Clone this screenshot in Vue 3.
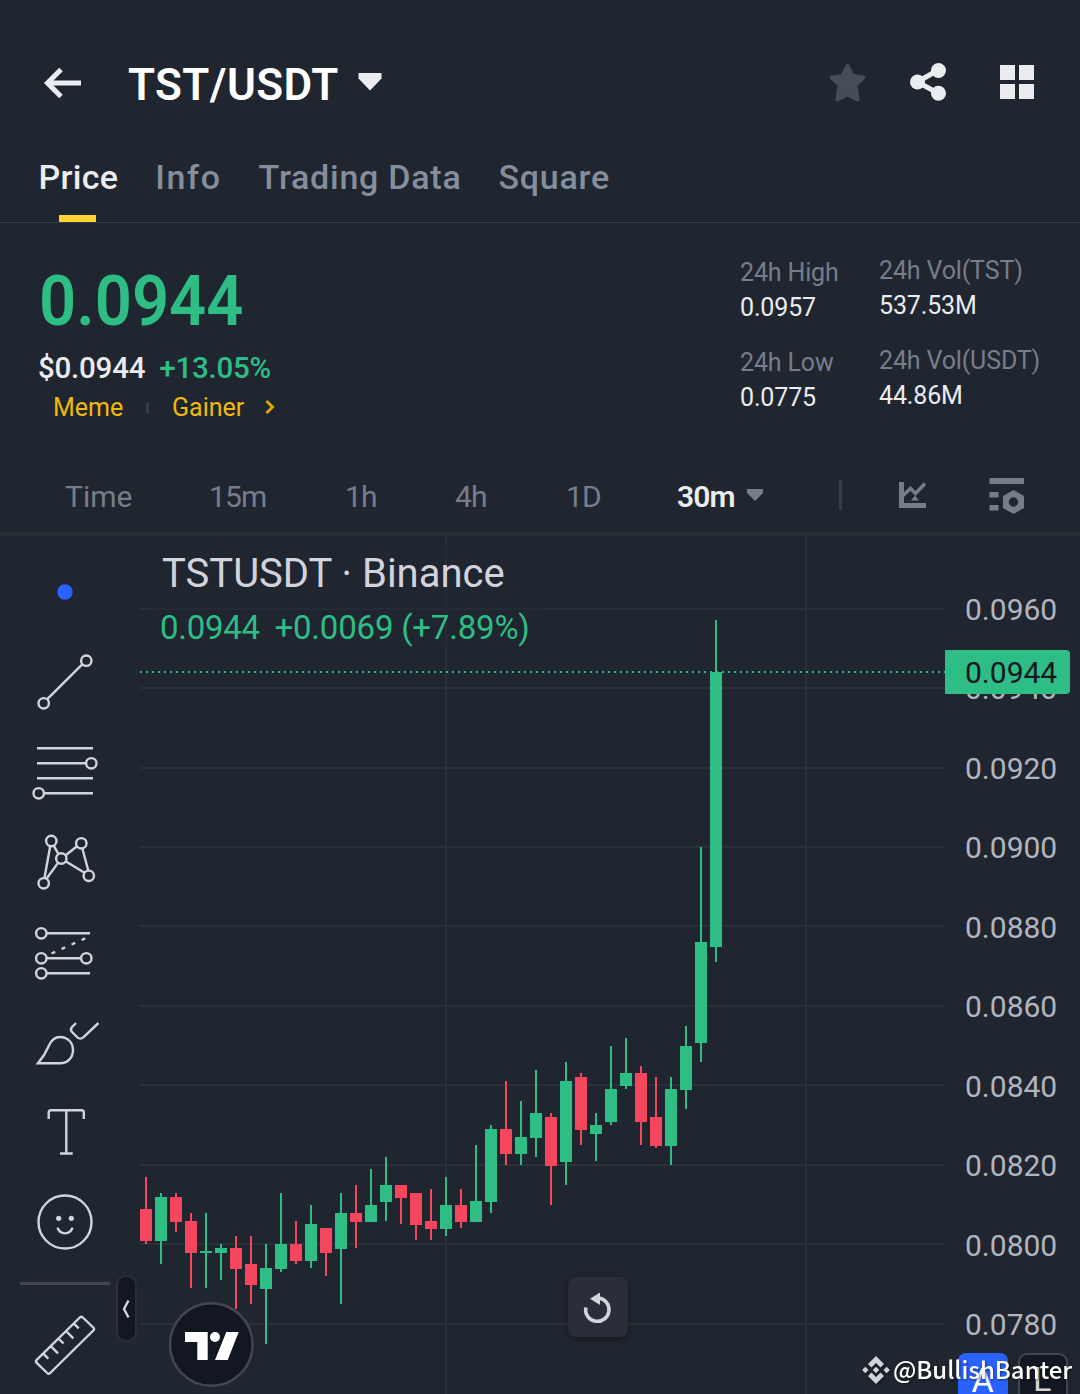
<script setup>
import { ref } from 'vue'

const tabs = ['Price', 'Info', 'Trading Data', 'Square']
const activeTab = ref('Price')

const stats = [
  [
    { label: '24h High', value: '0.0957' },
    { label: '24h Low', value: '0.0775' }
  ],
  [
    { label: '24h Vol(TST)', value: '537.53M' },
    { label: '24h Vol(USDT)', value: '44.86M' }
  ]
]

const intervals = ['Time', '15m', '1h', '4h', '1D']

const gridRows = [
  { y: 609, price: '0.0960' },
  { y: 688, price: '0.0940' },
  { y: 768, price: '0.0920' },
  { y: 847, price: '0.0900' },
  { y: 926.500, price: '0.0880' },
  { y: 1006, price: '0.0860' },
  { y: 1085.500, price: '0.0840' },
  { y: 1165, price: '0.0820' },
  { y: 1244.500, price: '0.0800' },
  { y: 1324, price: '0.0780' }
]

// up, high, low, body top, body bottom
const candles = [
  [0, 1177, 1244, 1209, 1241],
  [1, 1193, 1264, 1197, 1241],
  [0, 1193, 1232, 1197, 1222],
  [0, 1213, 1288, 1221, 1253],
  [1, 1213, 1288, 1251, 1253],
  [1, 1244, 1280, 1248, 1253],
  [0, 1236, 1309, 1248, 1269],
  [0, 1236, 1304, 1264, 1285],
  [1, 1244, 1344, 1268, 1289],
  [1, 1193, 1272, 1244, 1269],
  [0, 1221, 1264, 1244, 1261],
  [1, 1205, 1268, 1224, 1261],
  [0, 1228, 1276, 1228, 1253],
  [1, 1193, 1304, 1213, 1249],
  [0, 1185, 1248, 1213, 1222],
  [1, 1169, 1222, 1205, 1222],
  [1, 1157, 1221, 1185, 1202],
  [0, 1185, 1224, 1185, 1198],
  [0, 1193, 1240, 1193, 1225],
  [0, 1189, 1240, 1221, 1229],
  [1, 1177, 1236, 1205, 1229],
  [0, 1189, 1228, 1205, 1222],
  [1, 1145, 1222, 1201, 1222],
  [1, 1125, 1213, 1129, 1202],
  [0, 1081, 1165, 1129, 1154],
  [1, 1101, 1165, 1137, 1154],
  [1, 1070, 1157, 1113, 1138],
  [0, 1113, 1205, 1117, 1166],
  [1, 1062, 1185, 1081, 1162],
  [0, 1073, 1145, 1077, 1130],
  [1, 1113, 1161, 1125, 1134],
  [1, 1046, 1125, 1089, 1122],
  [1, 1038, 1089, 1073, 1086],
  [0, 1066, 1145, 1073, 1122],
  [0, 1077, 1148, 1117, 1146],
  [1, 1077, 1165, 1089, 1146],
  [1, 1026, 1109, 1046, 1090],
  [1, 847, 1062, 942, 1043],
  [1, 620, 962, 672, 947]
].map(([up, high, low, top, bottom], i) => ({ up, high, low, top, bottom, x: 140 + i * 15 }))
</script>

<template>
  <div class="screen">
    <header class="header">
      <svg class="back" width="40" height="32" viewBox="0 0 40 32">
        <path d="M18 2.500 4.500 16l13.500 13.500M5 16h33" fill="none" stroke="#eaecef" stroke-width="5" />
      </svg>
      <h1>TST/USDT</h1>
      <svg class="caret" width="24" height="18" viewBox="0 0 24 18"><path d="M.5 0h23v5.500L12 17.500.5 5.500z" fill="#eaecef" /></svg>
      <div class="actions">
        <svg width="38" height="40" viewBox="0 0 38 40">
          <path d="M19.500 4l4.900 9.900 11 1.500-8 7.600 2.200 14.400-10.100-5.200-10.100 5.200 2.200-14.400-8-7.600 11-1.500z" fill="#474d57" stroke="#474d57" stroke-width="4" stroke-linejoin="round" />
        </svg>
        <svg width="36" height="40" viewBox="0 0 36 40">
          <path d="M28.300 8 7.300 20l21 11.300" fill="none" stroke="#eaecef" stroke-width="5" />
          <circle cx="7.500" cy="20" r="7.500" fill="#eaecef" />
          <circle cx="28.500" cy="8.500" r="7.500" fill="#eaecef" />
          <circle cx="28.500" cy="31.300" r="7.500" fill="#eaecef" />
        </svg>
        <svg width="34" height="34" viewBox="0 0 34 34">
          <path d="M0 0h15v15H0zM19 0h15v15H19zM0 19h15v15H0zM19 19h15v15H19z" fill="#eaecef" />
        </svg>
      </div>
    </header>

    <nav class="tabs">
      <a v-for="tab in tabs" :key="tab" :class="{ active: tab === activeTab }" @click="activeTab = tab">{{ tab }}</a>
    </nav>

    <section class="summary">
      <div>
        <div class="price">0.0944</div>
        <div class="change"><span>$0.0944</span><span class="up">+13.05%</span></div>
        <div class="tags">
          <span>Meme</span>
          <i></i>
          <span>Gainer</span>
          <svg width="10" height="14" viewBox="0 0 10 14"><path d="M1.500 1 7.500 7l-6 6" fill="none" stroke="#d9a50f" stroke-width="3" /></svg>
        </div>
      </div>
      <div class="stats">
        <dl v-for="(col, i) in stats" :key="i">
          <template v-for="item in col" :key="item.label">
            <dt>{{ item.label }}</dt>
            <dd>{{ item.value }}</dd>
          </template>
        </dl>
      </div>
    </section>

    <div class="intervals">
      <span v-for="item in intervals" :key="item">{{ item }}</span>
      <span class="selected">30m
        <svg width="16" height="12" viewBox="0 0 16 12"><path d="M0 0h16v4L8 12 0 4z" fill="#767d89" /></svg>
      </span>
      <i></i>
      <svg width="28" height="28" viewBox="0 0 28 28" fill="none" stroke="#767d89">
        <path d="M2.500 1v23.500H27" stroke-width="5" />
        <path d="M4 14.500 11.500 7.500l5 5L26 2.500" stroke-width="3.500" />
        <path d="M16 14.500l4 5h-8z" fill="#767d89" stroke="none" />
      </svg>
      <svg class="settings" width="36" height="36" viewBox="0 0 36 36" fill="#767d89">
        <path d="M.5 0h34.500v6H.5zM.5 14h9v5.500h-9zM.5 27h9v5.500h-9z" />
        <path fill-rule="evenodd" d="M24.500 12 35 18v12l-10.500 6L14 30V18zM24.500 19.300a4.700 4.700 0 1 0 0 9.400 4.700 4.700 0 0 0 0-9.400z" />
      </svg>
    </div>

    <main class="board">
      <aside class="tools">
        <svg viewBox="0 0 130 90"><circle cx="65" cy="45" r="7.700" fill="#2962ff" /></svg>
        <svg viewBox="0 0 130 90">
          <path d="M47.300 62.200 82.200 27.300" />
          <circle cx="86.300" cy="23.700" r="5.200" /><circle cx="43.700" cy="66.300" r="5.200" />
        </svg>
        <svg viewBox="0 0 130 90">
          <path d="M37 21.300h56M37 36.300h49M37 51.300h56M44 66.300h49" />
          <circle cx="91.300" cy="36.300" r="5.200" /><circle cx="38.700" cy="66.300" r="5.200" />
        </svg>
        <svg viewBox="0 0 130 90">
          <path d="M50.200 29.200 44.500 60.800M53.700 28.600l4.700 8.300M65.400 38.500 77 29.200M58 45.900 46.500 61.700M65.600 44.200l18.900 11.600M82.300 31.200l5.900 22" />
          <circle cx="51.300" cy="24" r="5.200" /><circle cx="81.300" cy="26.300" r="5.200" /><circle cx="61.300" cy="41.500" r="5.200" />
          <circle cx="43.700" cy="66.300" r="5.200" /><circle cx="88.800" cy="58.800" r="5.200" />
        </svg>
        <svg viewBox="0 0 130 90">
          <path d="M46.500 26.300H90M46.500 51.300H81M46.500 66.300H90" />
          <path d="M51.500 46.500 86 31" stroke-dasharray="4 7" />
          <circle cx="41.300" cy="26.300" r="5.200" /><circle cx="41.300" cy="51.300" r="5.200" />
          <circle cx="86.300" cy="51.300" r="5.200" /><circle cx="41.300" cy="66.300" r="5.200" />
        </svg>
        <svg viewBox="0 0 130 90">
          <path d="M38 66.300H60c8 0 13-6 13-13.300 0-8-6-13-13-13-6 0-9 4-11 8.500-3 7-6 12-11 17.800z" />
          <path d="M76 26l-4 4c-1.500 2-1 4 0 5l5.500 5.500c1.500 1.500 4 1.500 5.500 0L98.500 26" />
        </svg>
        <svg viewBox="0 0 130 90"><path d="M48.700 32v-6.500q0-2.300 2.300-2.300h30.500q2.300 0 2.300 2.300V32M66.300 23.200v43.300M60 66.500h12.700" /></svg>
        <svg viewBox="0 0 130 90">
          <circle cx="65" cy="45" r="26.500" />
          <path d="M57.500 50.700c2.500 7.500 12.500 7.500 15 0" />
          <circle class="fill" cx="58.700" cy="41.300" r="2.600" /><circle class="fill" cx="71.300" cy="41.300" r="2.600" />
        </svg>
        <hr />
        <svg viewBox="0 0 130 90">
          <path d="M79.800 17.500q1.500-1.500 3 0l10.500 10q1.500 1.500 0 3L50.200 73q-1.500 1.500-3 0L36.700 62.800q-1.500-1.500 0-3zM43.300 53.700l5 5M50.800 46.200l7.200 7.200M58.500 38.500l5 5M66 31l7.300 7.300M73.700 23.300l5 5" />
        </svg>
        <button class="collapse">
          <svg viewBox="0 0 8 20"><path d="M6.500 1.500 2 10l4.500 8.500" /></svg>
        </button>
      </aside>

      <svg class="chart" width="940" height="858" viewBox="140 536 940 858">
        <g stroke="#2b3139" stroke-width="2">
          <line v-for="row in gridRows" :key="row.y" x1="140" x2="945" :y1="Math.floor(row.y)" :y2="Math.floor(row.y)" />
          <path d="M446 536v858M806 536v858" />
        </g>
        <path d="M140 672H945" stroke="#2ebd85" stroke-width="2" stroke-dasharray="2 4" />
        <g v-for="c in candles" :key="c.x" :fill="c.up ? '#2ebd85' : '#f6465d'">
          <rect :x="c.x + 5" :y="c.high" width="2" :height="c.low - c.high" />
          <rect :x="c.x" :y="c.top" width="12" :height="c.bottom - c.top" />
        </g>

        <rect x="150" y="542" width="394" height="106" fill="#202630" opacity=".5" />
        <text x="162" y="587" font-size="40" fill="#d1d4dc">TSTUSDT · Binance</text>
        <text x="160" y="639" font-size="33" letter-spacing="-.3" fill="#2ebd85">0.0944</text>
        <text x="274.500" y="639" font-size="33" letter-spacing="-.2" fill="#2ebd85">+0.0069 (+7.89%)</text>

        <text v-for="row in gridRows" :key="row.price" x="965" :y="row.y + 11" font-size="30" fill="#b2b5be">{{ row.price }}</text>
        <path d="M945 650h121q4 0 4 4v36q0 4-4 4H945z" fill="#2ebd85" />
        <text x="965" y="683" font-size="30" fill="#131722">0.0944</text>

        <circle cx="211.300" cy="1344.500" r="41.300" fill="#131722" stroke="#434651" stroke-width="2.500" />
        <g fill="#fff">
          <path d="M185 1332h22.700v28h-10.400v-18H185zM226.300 1332h12.400l-11 28H215z" />
          <circle cx="215" cy="1337" r="5" />
        </g>

        <rect class="reset" x="568" y="1277" width="60" height="60" rx="8" fill="#2a2e39" />
        <path d="M585.800 1307.500a11.700 11.700 0 1 0 12.700-9.500" fill="none" stroke="#d1d4dc" stroke-width="3.500" />
        <path d="M590 1298.700l10-6.200v12.500z" fill="#d1d4dc" />

        <rect x="958" y="1353" width="50" height="60" rx="8" fill="#2962ff" />
        <rect x="1019" y="1354" width="48" height="60" rx="8" fill="#131722" stroke="#434651" stroke-width="2" />
        <text x="971.500" y="1392" font-size="34" fill="#fff">A</text>
        <text x="1033" y="1391" font-size="34" fill="#d1d4dc">L</text>

        <g class="watermark">
          <path d="M876 1356l8 8-3.500 3.500-4.500-4.500-4.500 4.500-3.500-3.500zM876 1384l8-8-3.500-3.500-4.500 4.500-4.500-4.500-3.500 3.500zM876 1366.800l3.200 3.200-3.200 3.200-3.200-3.200zM865.300 1366.800l3.200 3.200-3.200 3.200-3.200-3.200zM886.700 1366.800l3.200 3.200-3.200 3.200-3.200-3.200z" fill="#d1d4dc" />
          <text x="893" y="1379" font-size="24" fill="#fff">@BullishBanter</text>
        </g>
      </svg>
    </main>
  </div>
</template>

<style>
body {
  background: #202630;
}
</style>

<style scoped>
.screen {
  width: 1080px;
  height: 1394px;
  overflow: hidden;
  background: #202630;
  color: #eaecef;
  font-family: Roboto, 'Liberation Sans', sans-serif;
}

svg {
  display: block;
  flex-shrink: 0;
}

.header {
  display: flex;
  align-items: center;
  height: 135px;
  padding: 33px 46px 0 43px;
  box-sizing: border-box;
}

.header .back {
  margin-top: -3px;
}

.header h1 {
  margin: 1px 0 0 45px;
  width: 230px;
  font-size: 44px;
  font-weight: 600;
  line-height: 60px;
  letter-spacing: 0.4px;
  color: #fff;
}

.header .caret {
  margin-top: -5px;
}

.actions {
  display: flex;
  align-items: center;
  margin: -5px 0 0 auto;
}

.actions svg + svg {
  margin-left: 44px;
}

.actions svg:last-child {
  margin-left: 54px;
}

.tabs {
  display: flex;
  gap: 37px;
  height: 87px;
  padding-left: 38.5px;
  border-bottom: 1px solid #333b44;
  font-size: 34px;
  font-weight: 500;
  line-height: 85px;
  letter-spacing: 0.75px;
  color: #848e9c;
}

.tabs a {
  position: relative;
}

.tabs a:nth-child(2) {
  letter-spacing: 1.6px;
}

.tabs .active {
  letter-spacing: 0.3px;
  color: #eaecef;
}

.tabs .active::after {
  content: '';
  position: absolute;
  left: 20.5px;
  bottom: 0;
  width: 37px;
  height: 7px;
  background: #fcd535;
}

.summary {
  display: flex;
  justify-content: space-between;
  height: 237px;
  padding: 30px 20px 0 39px;
  box-sizing: border-box;
}

.price {
  margin-top: 13px;
  font-size: 70px;
  font-weight: 600;
  line-height: 70px;
  color: #2ebd85;
  transform: scaleX(0.93);
  transform-origin: left;
}

.change {
  display: flex;
  gap: 14px;
  margin: 12px 0 0 -1px;
  font-size: 29.5px;
  font-weight: 500;
  line-height: 40px;
  letter-spacing: -0.22px;
}

.up {
  color: #2ebd85;
}

.tags {
  display: flex;
  align-items: center;
  padding-left: 14px;
  font-size: 25px;
  line-height: 40px;
  color: #f0b90b;
}

.tags span {
  width: 93px;
}

.tags i {
  width: 3px;
  height: 10px;
  margin-right: 23px;
  background: #373c45;
}

.tags svg {
  margin-top: -2px;
}

.stats {
  display: flex;
}

.stats dl {
  width: 181px;
  margin: 0;
  font-size: 25px;
  line-height: 35px;
  letter-spacing: -0.15px;
}

.stats dl:first-child {
  width: 139px;
  margin-top: 2px;
}

.stats dt {
  color: #767d8b;
}

.stats dd {
  margin: 0 0 20px;
}

.intervals {
  display: grid;
  grid-template-columns: 144px 136px 110px 111px 111px 162px 60px 90px 36px;
  align-items: center;
  height: 72px;
  padding-left: 65px;
  border-bottom: 4px solid #262b34;
  font-size: 30px;
  letter-spacing: -0.9px;
  color: #767d8b;
}

.intervals span:first-child {
  letter-spacing: 0;
}

.intervals .selected {
  display: flex;
  align-items: center;
  gap: 12px;
  font-weight: 600;
  color: #eaecef;
}

.intervals svg,
.intervals i {
  margin-top: -3px;
}

.intervals .settings {
  margin-top: -1px;
}

.intervals i {
  width: 3px;
  height: 30px;
  background: #373c45;
}

.board {
  display: flex;
}

.tools {
  position: relative;
  width: 140px;
  padding-top: 11px;
}

.tools svg {
  width: 130px;
  height: 90px;
  fill: none;
  stroke: #d1d4dc;
  stroke-width: 2.4;
}

.tools svg:first-child {
  stroke: none;
}

.tools .fill {
  fill: #d1d4dc;
  stroke: none;
}

.tools hr {
  width: 90px;
  height: 3px;
  margin: 15px 0 15px 20px;
  border: none;
  background: #434651;
}

.collapse {
  position: absolute;
  left: 116px;
  top: 739px;
  display: flex;
  align-items: center;
  justify-content: center;
  width: 21px;
  height: 67px;
  padding: 0 2px 0 0;
  border: 2px solid #2a2e39;
  border-radius: 10px;
  background: #131722;
}

.tools .collapse svg {
  width: 8px;
  height: 20px;
  stroke: #d1d4dc;
}

.reset {
  filter: drop-shadow(0 2px 4px rgba(0, 0, 0, 0.4));
}

.watermark {
  font-family: 'Noto Sans CJK SC', 'Noto Sans', sans-serif;
  font-weight: 500;
  filter: drop-shadow(1px 1px 1px rgba(0, 0, 0, 0.5));
}
</style>
